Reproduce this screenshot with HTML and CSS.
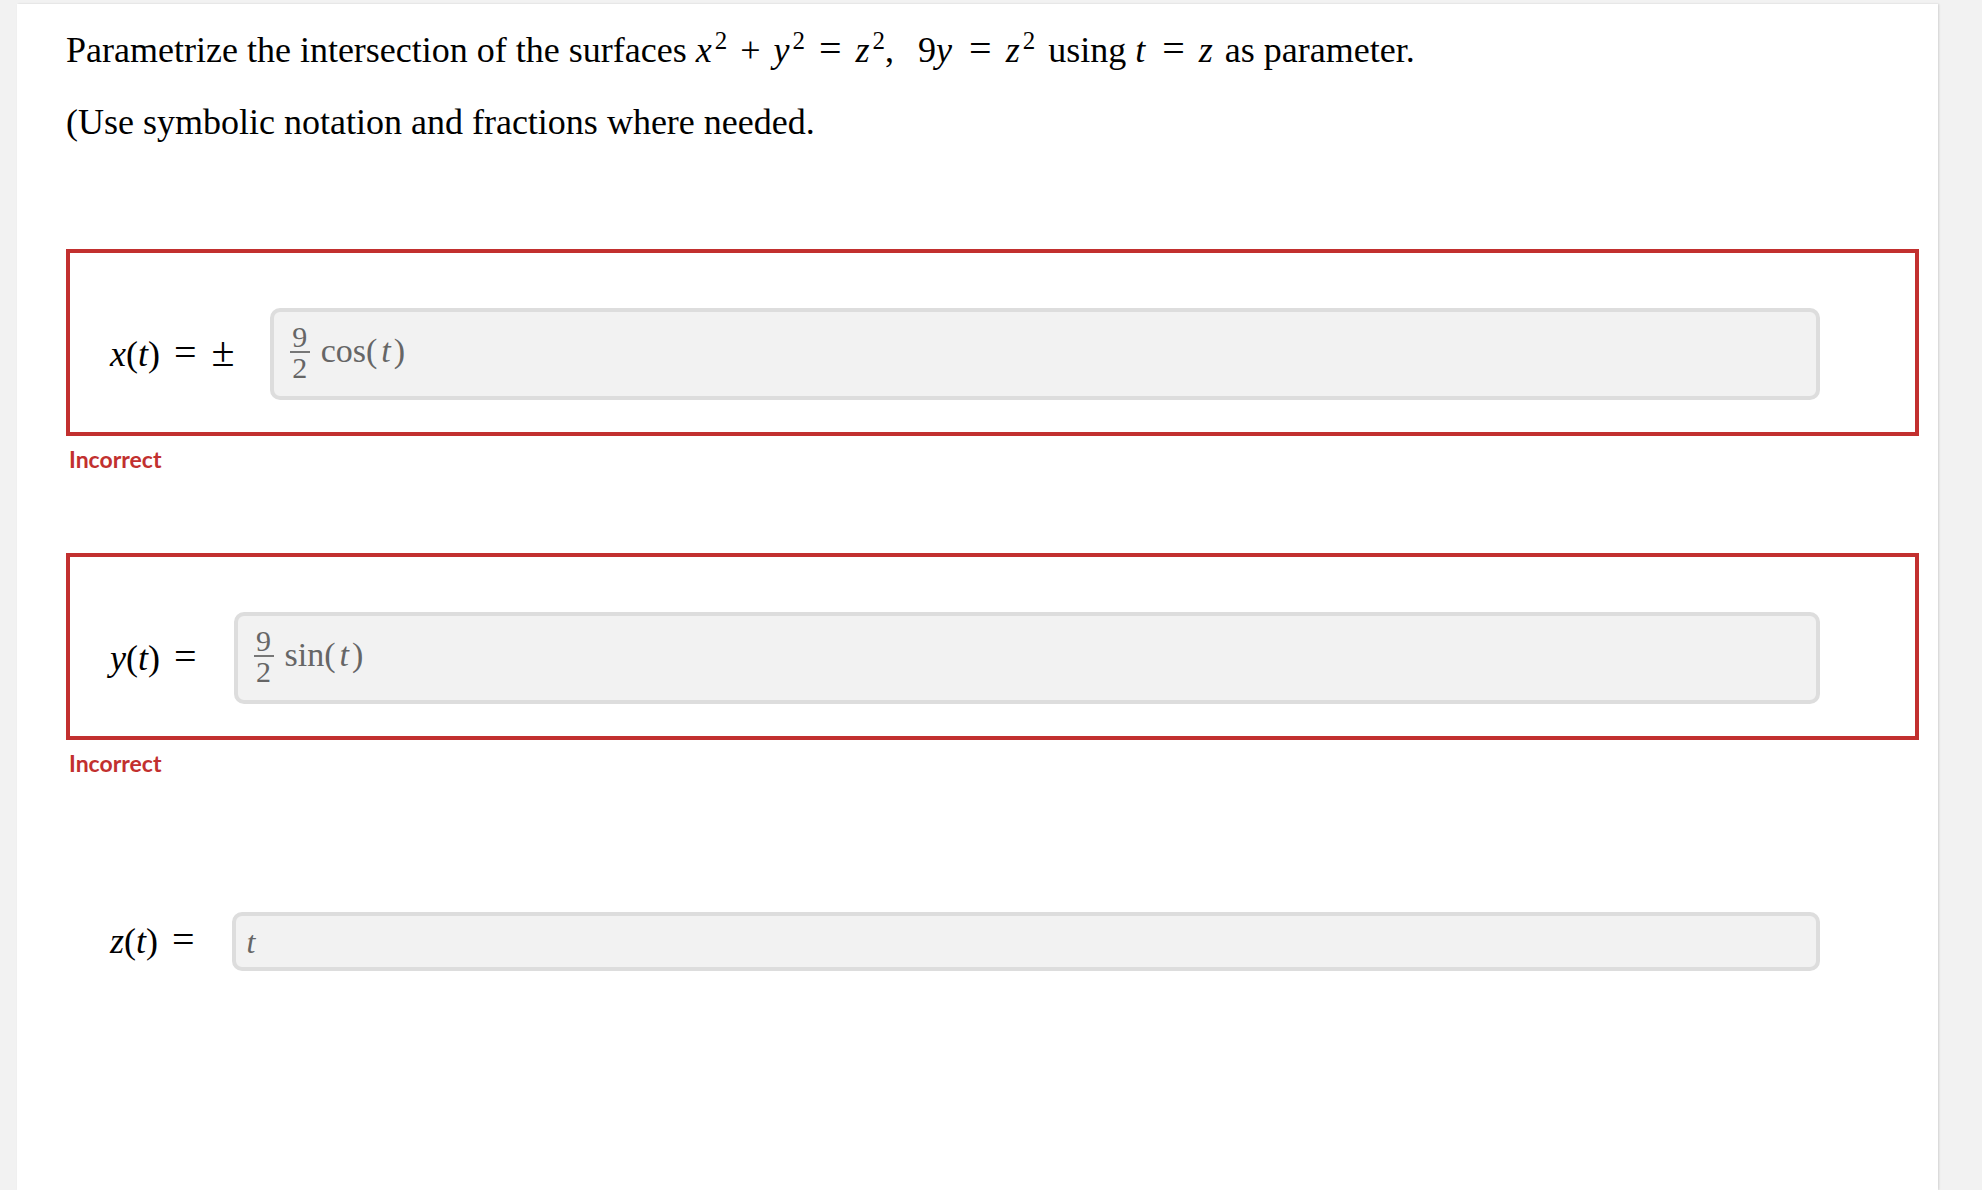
FILE: index.html
```html
<!DOCTYPE html>
<html lang="en">
<head>
<meta charset="utf-8">
<title>Parametrize the intersection</title>
<link rel="stylesheet" href="styles.css">
</head>
<body>
<main class="card">
  <p class="prompt">Parametrize the intersection of the surfaces <span class="m"><i>x</i><span class="sup">2</span><span class="bin">+</span><i>y</i><span class="sup">2</span><span class="rel">=</span><i>z</i><span class="sup">2</span>,<span class="qsp"></span>9<i>y</i><span class="rel">=</span><i>z</i><span class="sup">2</span></span> <span class="gap">using</span> <span class="m"><i>t</i><span class="rel">=</span><i>z</i></span> as parameter.</p>
  <p class="prompt second">(Use symbolic notation and fractions where needed.</p>

  <section class="answer incorrect first">
    <div class="label"><i>x</i>(<i>t</i>)<span class="rel">=</span><span class="pm">±</span></div>
    <div class="field tall">
      <span class="frac"><span class="num">9</span><span class="bar"></span><span class="den">2</span></span>
      <span class="expr">cos<span class="paren">(</span><i class="arg">t</i><span class="paren">)</span></span>
    </div>
  </section>
  <div class="feedback">Incorrect</div>

  <section class="answer incorrect">
    <div class="label"><i>y</i>(<i>t</i>)<span class="rel">=</span></div>
    <div class="field tall">
      <span class="frac"><span class="num">9</span><span class="bar"></span><span class="den">2</span></span>
      <span class="expr">sin<span class="paren">(</span><i class="arg">t</i><span class="paren">)</span></span>
    </div>
  </section>
  <div class="feedback">Incorrect</div>

  <section class="answer plain">
    <div class="label"><i>z</i>(<i>t</i>)<span class="rel">=</span></div>
    <div class="field short">
      <i class="single">t</i>
    </div>
  </section>
</main>
</body>
</html>
```

FILE: styles.css
```css
html, body {
  margin: 0;
  padding: 0;
}

body {
  background: #f2f2f2;
  font-family: "Liberation Serif", "Times New Roman", serif;
  color: #000;
  overflow: hidden;
}

.card {
  margin: 4px 0 0 17px;
  width: 1921px;
  min-height: 1186px;
  box-sizing: border-box;
  padding: 26px 19px 0 49px;
  background: #fff;
  box-shadow: 1px 0 2px rgba(0, 0, 0, 0.14);
}

.prompt {
  margin: 0;
  font-size: 36px;
  line-height: 41px;
}

.prompt.second {
  margin-top: 31px;
}

.m {
  white-space: nowrap;
}

.m i {
  margin-right: 3px;
}

.sup {
  font-size: 25px;
  line-height: 0;
  vertical-align: 13px;
}

.bin {
  margin: 0 13px;
}

.rel {
  font-size: 40px;
  line-height: 0;
  margin: 0 14px;
}

.qsp {
  display: inline-block;
  width: 24px;
}

.gap {
  margin-left: 4px;
}

.answer {
  display: flex;
  align-items: center;
  border: 4px solid #c2302f;
  padding: 55px 95px 32px 40px;
  margin-top: 80px;
}

.answer.first {
  margin-top: 106px;
}

.answer.plain {
  border-color: transparent;
  margin-top: 76px;
}

.label {
  font-size: 36px;
  line-height: 41px;
  white-space: nowrap;
  margin-right: 22px;
}

.label .rel {
  margin: 0 15px 0 14px;
}

.label .pm {
  font-size: 42px;
  line-height: 0;
  margin-right: 13px;
}

.field {
  flex: 1;
  display: flex;
  align-items: center;
  box-sizing: border-box;
  background: #f2f2f2;
  border: 4px solid #dddddd;
  border-radius: 10px;
  color: #666;
}

.field.tall {
  height: 92px;
  padding: 0 16px;
}

.field.short {
  height: 59px;
  padding: 0 11px;
}

.frac {
  display: inline-flex;
  flex-direction: column;
  align-items: center;
  font-size: 30px;
  line-height: 29px;
  margin: 0 11px 4px 0;
}

.frac .bar {
  width: 20px;
  height: 0;
  border-top: 2px solid #777;
}

.expr {
  font-size: 34px;
  line-height: 34px;
  margin-bottom: 7px;
}

.paren {
  display: inline-block;
}

.arg {
  margin: 0 3px 0 4px;
}

.single {
  font-size: 32px;
  line-height: 32px;
}

.feedback {
  font-family: Lato, "Open Sans", sans-serif;
  font-weight: 700;
  font-size: 23px;
  line-height: 28px;
  color: #c2302f;
  margin: 9px 0 0 3px;
}
```
